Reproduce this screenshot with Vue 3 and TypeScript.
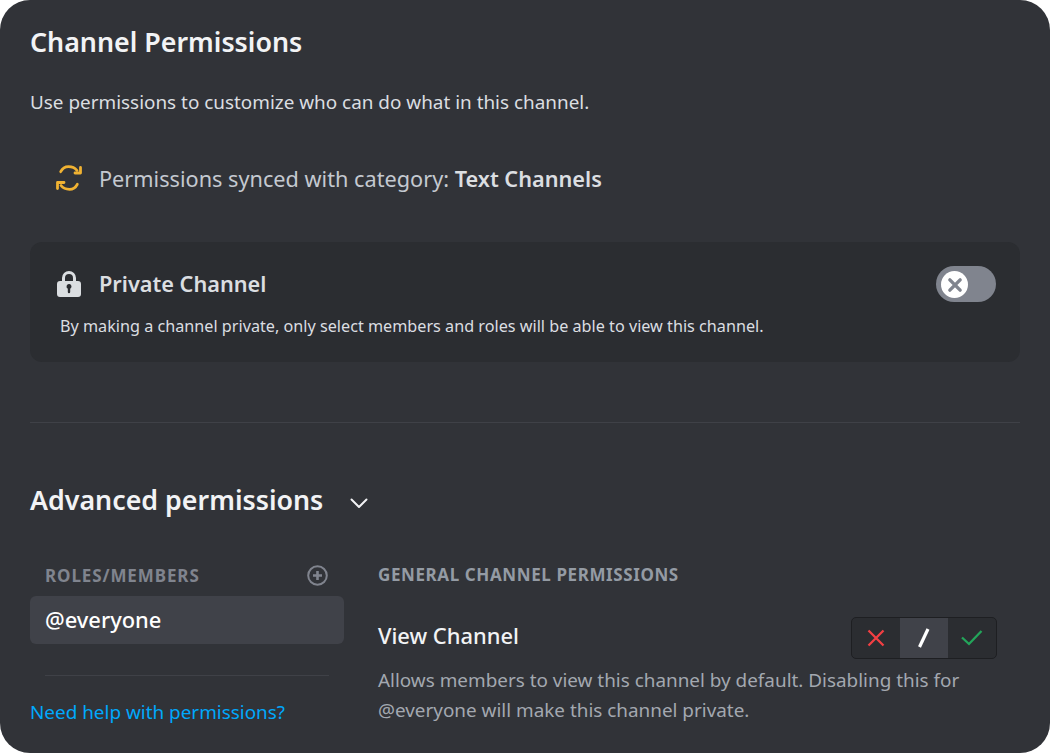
<template>
  <div class="panel">
    <h1 class="title">Channel Permissions</h1>
    <p class="intro">Use permissions to customize who can do what in this channel.</p>

    <div class="synced">
      <svg class="sync-icon" width="26" height="26" viewBox="0 0 26 26" fill="none" stroke="#f0b232" stroke-width="2.800" stroke-linecap="round" stroke-linejoin="round">
        <path d="M4.700 6.700C6.500 3.200 9.200 1.700 12.500 1.700c3.500 0 6.500 1.300 8.500 3.800" />
        <path d="M24.500 2.500v5.500h-5.500" />
        <path d="M21.300 19.300C19.500 22.800 16.800 24.300 13.500 24.300c-3.500 0-6.500-1.300-8.500-3.800" />
        <path d="M1.500 23.500v-6h6.500" />
      </svg>
      <span>Permissions synced with category: <strong>Text Channels</strong></span>
    </div>

    <section class="private-card">
      <div class="private-row">
        <div class="private-name">
          <svg class="lock" width="24" height="26" viewBox="0 0 24 26">
            <path fill="#dbdee1" fill-rule="evenodd" d="M5 10V7a7 7 0 0 1 14 0v3h2a3 3 0 0 1 3 3v10a3 3 0 0 1-3 3H3a3 3 0 0 1-3-3V13a3 3 0 0 1 3-3h2Zm3 0h8V7a4 4 0 0 0-8 0v3Zm6.500 5.500a2.500 2.500 0 0 1-1.300 2.200V21a1.200 1.200 0 0 1-2.400 0v-3.300a2.500 2.500 0 1 1 3.700-2.200Z" />
          </svg>
          <span class="private-label">Private Channel</span>
        </div>
        <div class="toggle">
          <span class="knob">
            <svg width="16" height="16" viewBox="0 0 14 14" stroke="#80848e" stroke-width="3" stroke-linecap="round">
              <path d="M2.500 2.500l9 9M11.500 2.500l-9 9" />
            </svg>
          </span>
        </div>
      </div>
      <p class="private-note">By making a channel private, only select members and roles will be able to view this channel.</p>
    </section>

    <hr class="divider" />

    <div class="advanced-head">
      <h2>Advanced permissions</h2>
      <svg class="chevron" width="20" height="20" viewBox="0 0 20 20" fill="none" stroke="#f2f3f5" stroke-width="2" stroke-linecap="round" stroke-linejoin="round">
        <path d="M2.500 6.500l7.500 7.500 7.500-7.500" />
      </svg>
    </div>

    <div class="columns">
      <aside class="roles">
        <div class="roles-head">
          <span>ROLES/MEMBERS</span>
          <svg width="21" height="21" viewBox="0 0 21 21" fill="none" stroke="#80848e">
            <circle cx="10.500" cy="10.500" r="9.300" stroke-width="2" />
            <path d="M10.500 6v9M6 10.500h9" stroke-width="2.600" />
          </svg>
        </div>
        <div class="role-item">@everyone</div>
        <div class="roles-rule"></div>
        <a class="help-link">Need help with permissions?</a>
      </aside>

      <div class="perms">
        <div class="perms-head">GENERAL CHANNEL PERMISSIONS</div>
        <div class="perm-row">
          <span class="perm-name">View Channel</span>
          <div class="tri">
            <span class="tri-cell">
              <svg width="20" height="20" viewBox="0 0 20 20" stroke="#f23f43" stroke-width="2.300"><path d="M2.500 2.500l15 15M17.500 2.500l-15 15" /></svg>
            </span>
            <span class="tri-cell tri-cell--active">
              <svg width="16" height="20" viewBox="0 0 16 20" stroke="#fff" stroke-width="3.200"><path d="M12 1L3.500 19" /></svg>
            </span>
            <span class="tri-cell">
              <svg width="22" height="20" viewBox="0 0 22 20" fill="none" stroke="#23a55a" stroke-width="2.300"><path d="M1 9.500l7 6.500L20.500 3" /></svg>
            </span>
          </div>
        </div>
        <p class="perm-desc">Allows members to view this channel by default. Disabling this for @everyone will make this channel private.</p>
      </div>
    </div>
  </div>
</template>

<script setup lang="ts">
</script>

<style>
body {
  background: #fff;
}
</style>

<style scoped>
.panel {
  width: 1050px;
  height: 753px;
  box-sizing: border-box;
  padding: 24px 30px 0;
  background: #313338;
  border-radius: 30px;
  overflow: hidden;
  font-family: "Noto Sans", "Open Sans", sans-serif;
  color: #f2f3f5;
}

.title {
  margin: 0;
  font-size: 26.800px;
  line-height: 36px;
  font-weight: 600;
}

.intro {
  margin: 31px 0 0;
  font-size: 18.900px;
  line-height: 22px;
  color: #dbdee1;
}

.synced {
  display: flex;
  align-items: center;
  gap: 17px;
  margin-top: 49px;
  padding-left: 26px;
  height: 32px;
  font-size: 21.700px;
  color: #c4c9d0;
}

.synced strong {
  font-weight: 600;
  color: #dbdee1;
}

.private-card {
  margin-top: 48px;
  height: 120px;
  box-sizing: border-box;
  padding: 24px 24px 0 27px;
  background: #2b2d31;
  border-radius: 12px;
}

.private-row {
  display: flex;
  justify-content: space-between;
  align-items: center;
  height: 36px;
}

.private-name {
  display: flex;
  align-items: center;
  gap: 18px;
  font-size: 21.700px;
  font-weight: 600;
  color: #dbdee1;
}

.private-label {
  margin-bottom: 2px;
}

.toggle {
  width: 60px;
  height: 36px;
  box-sizing: border-box;
  padding: 5px;
  background: #80848e;
  border-radius: 18px;
}

.knob {
  display: flex;
  align-items: center;
  justify-content: center;
  width: 27px;
  height: 27px;
  background: #fff;
  border-radius: 50%;
}

.private-note {
  margin: 14px 0 0 3px;
  font-size: 16.200px;
  line-height: 20px;
  color: #dbdee1;
}

.divider {
  margin: 60px 0 0;
  border: 0;
  height: 1px;
  background: #3f4147;
}

.advanced-head {
  display: flex;
  align-items: center;
  gap: 26px;
  margin-top: 57px;
  height: 40px;
}

.advanced-head h2 {
  margin: 0 0 2px;
  font-size: 26.800px;
  font-weight: 600;
}

.chevron {
  margin-top: 6px;
}

.columns {
  display: flex;
  margin-top: 44px;
}

.roles {
  flex-shrink: 0;
  width: 314px;
}

.roles-head {
  display: flex;
  justify-content: space-between;
  align-items: center;
  height: 22px;
  padding: 0 16px 0 15px;
  font-size: 17px;
  letter-spacing: 0.900px;
  font-weight: 700;
  color: #80848e;
}

.role-item {
  margin-top: 10px;
  height: 48px;
  line-height: 48px;
  padding-left: 15px;
  background: #404249;
  border-radius: 6px;
  font-size: 21.900px;
  font-weight: 500;
  color: #fff;
}

.roles-rule {
  margin: 31px 15px 0;
  height: 1px;
  background: #3f4147;
}

.help-link {
  display: block;
  margin-top: 24px;
  font-size: 18.900px;
  line-height: 24px;
  color: #00a8fc;
}

.perms {
  flex: 1;
  padding: 0 23px 0 34px;
}

.perms-head {
  height: 22px;
  line-height: 22px;
  font-size: 17px;
  letter-spacing: 0.600px;
  font-weight: 700;
  color: #949ba4;
}

.perm-row {
  display: flex;
  justify-content: space-between;
  align-items: center;
  margin-top: 31px;
}

.perm-name {
  margin-bottom: 5px;
  font-size: 21.900px;
  font-weight: 500;
  color: #f2f3f5;
}

.tri {
  display: flex;
  height: 42px;
  box-sizing: border-box;
  border: 1px solid #1e1f22;
  border-radius: 5px;
  background: #2b2d31;
  overflow: hidden;
}

.tri-cell {
  display: flex;
  align-items: center;
  justify-content: center;
  width: 48px;
}

.tri-cell--active {
  background: #404249;
}

.perm-desc {
  margin: 6px 0 0;
  width: 600px;
  font-size: 18.900px;
  line-height: 30px;
  color: #a3a8b0;
}
</style>
